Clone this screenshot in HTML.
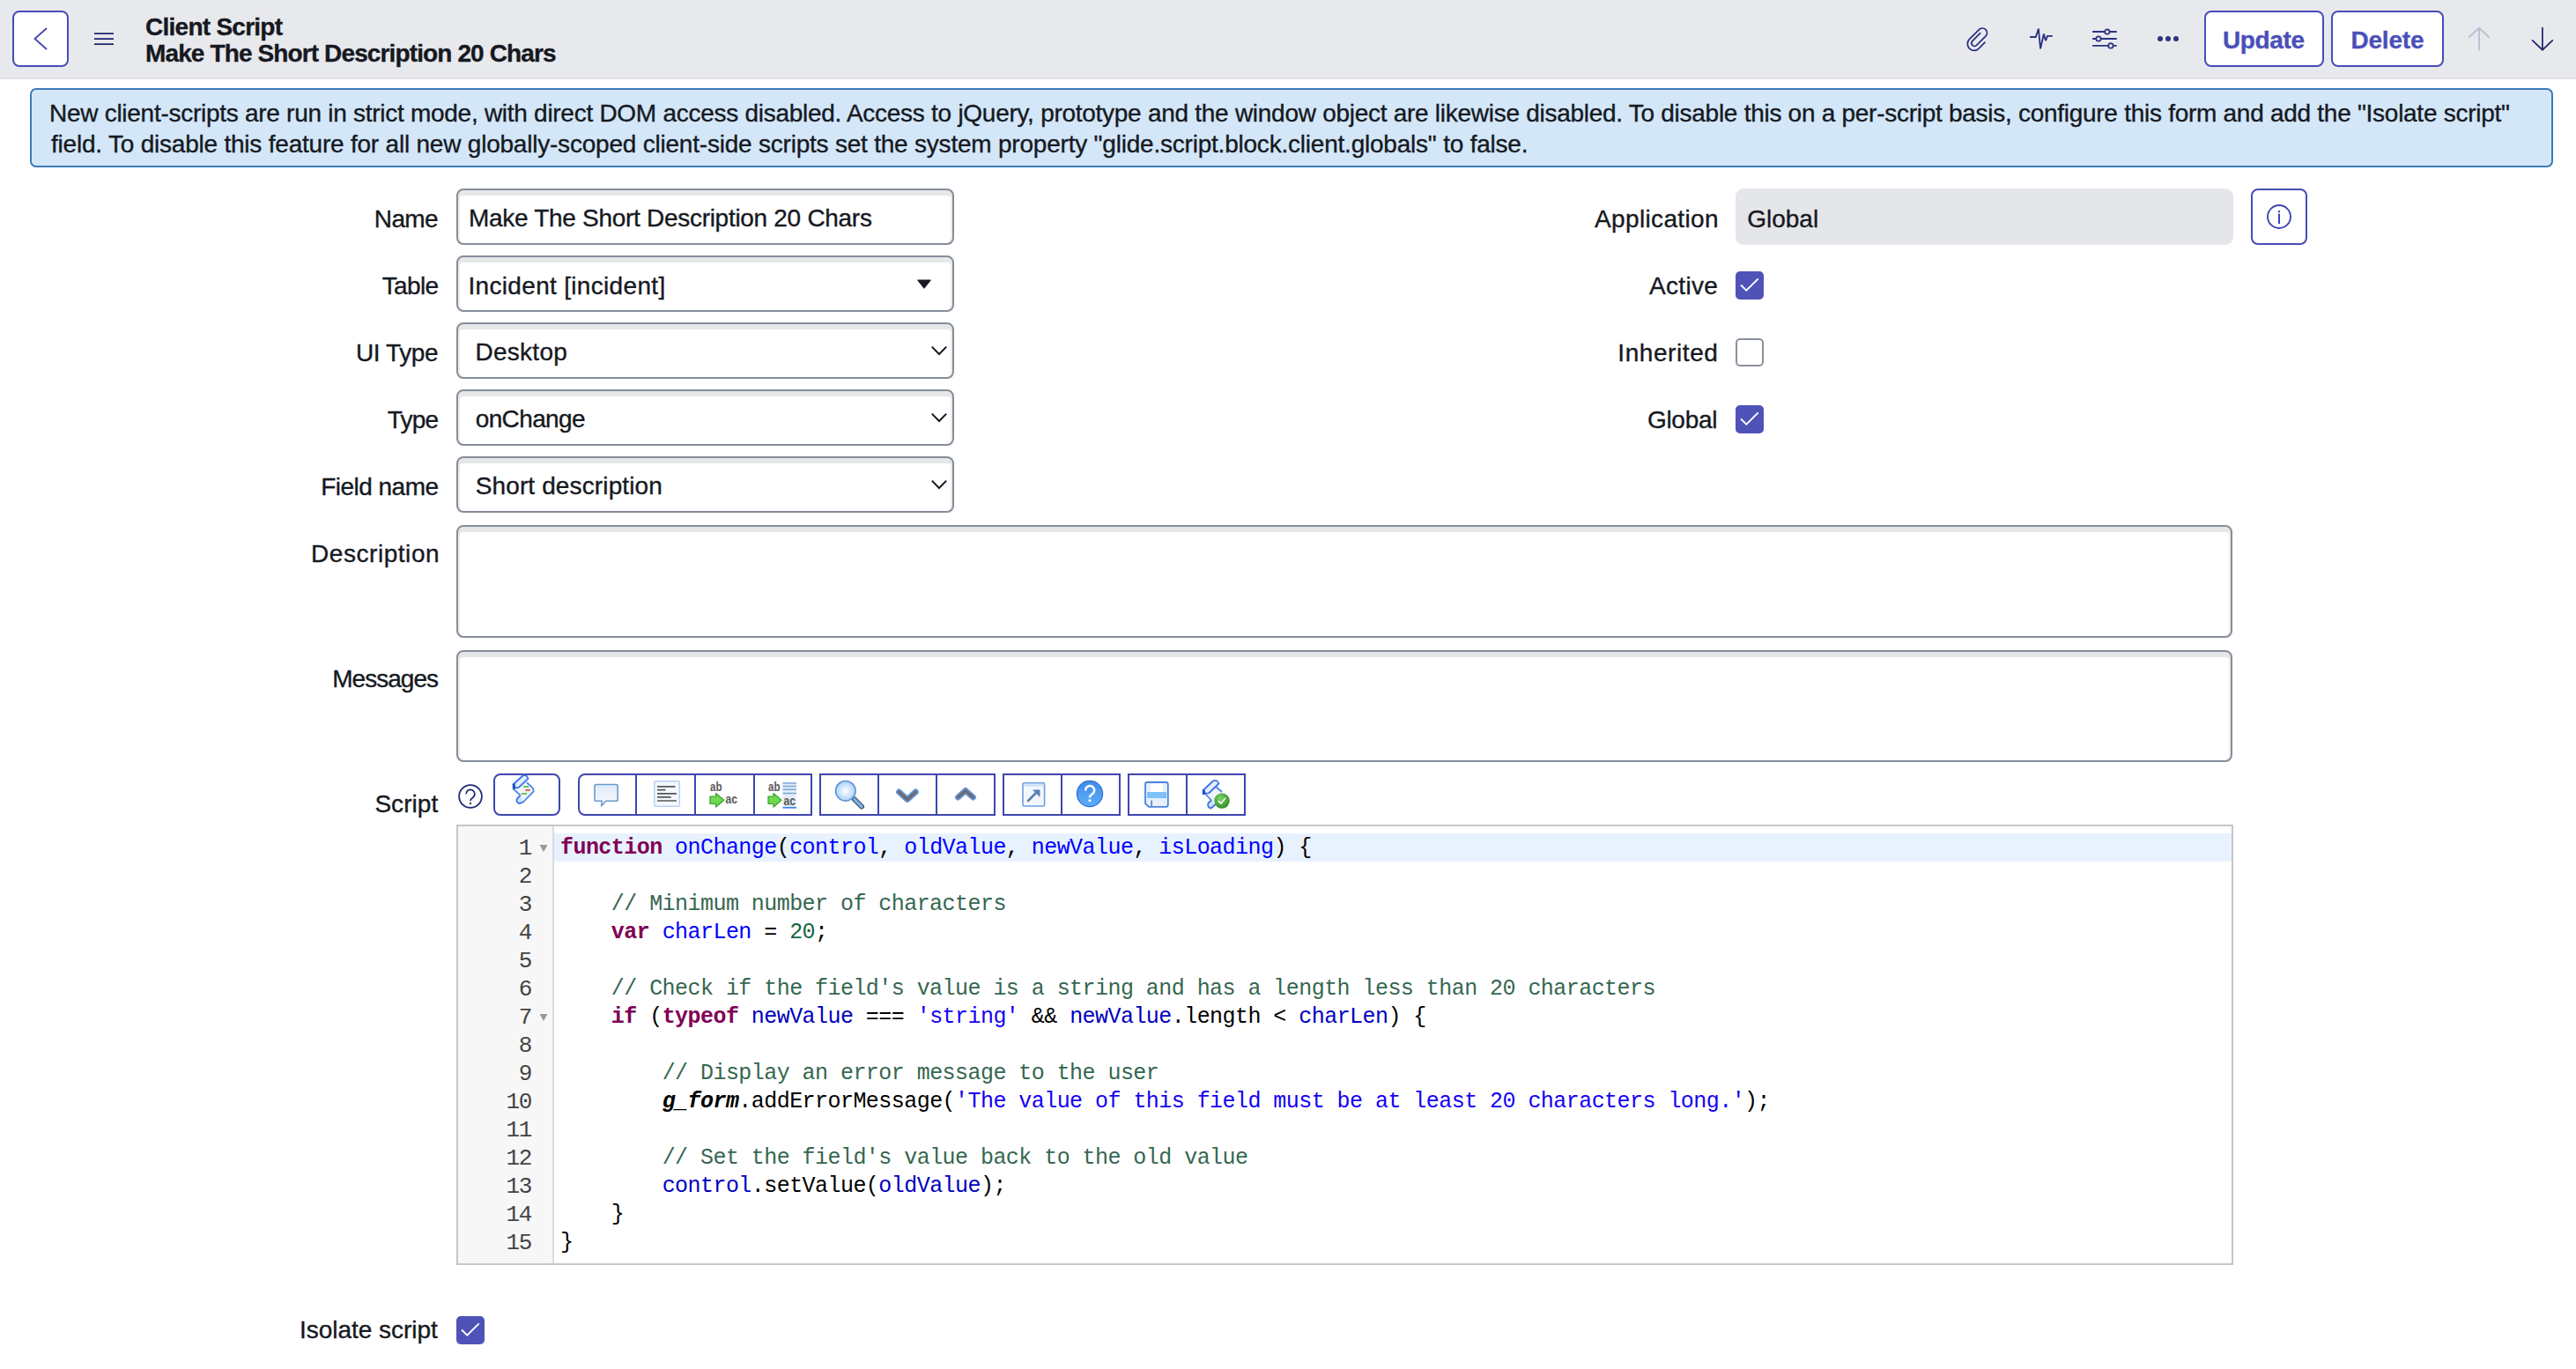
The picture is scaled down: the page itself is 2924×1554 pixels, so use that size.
<!DOCTYPE html>
<html><head><meta charset="utf-8"><title>Client Script</title>
<style>
*{box-sizing:border-box;margin:0;padding:0}
html,body{width:2924px;height:1554px;overflow:hidden;background:#fff}
body{position:relative;font-family:"Liberation Sans",sans-serif;color:#16191f}
.a{position:absolute}
.t{position:absolute;font-size:28px;line-height:32px;white-space:nowrap;-webkit-text-stroke:0.35px currentColor}
.btn{position:absolute;background:#fff;border:2px solid #474db7;border-radius:8px}
.inp{position:absolute;left:518px;width:565px;height:64px;border:2px solid #868d9a;border-radius:8px;background:#fff;box-shadow:inset 0 6px 0 #e6e8e8, inset 2px 0 0 #eceeee, inset -2px 0 0 #eceeee}
.cb{position:absolute;width:32px;height:32px;border-radius:5px;background:#4f53b8}
.cb svg{display:block}
.cbo{position:absolute;width:32px;height:32px;border-radius:5px;background:#fff;border:2px solid #8a909c}
.code{position:absolute;left:636px;font-family:"Liberation Mono",monospace;font-size:25px;letter-spacing:-0.55px;line-height:32px;white-space:pre;color:#000}
.ln{position:absolute;left:520px;width:83px;text-align:right;font-family:"Liberation Mono",monospace;font-size:26px;letter-spacing:-1.4px;line-height:32px;white-space:pre;color:#444}
.k{color:#7f0055;font-weight:bold}
.d{color:#0000ff}
.v{color:#0000c0}
.c{color:#35674f}
.n{color:#116644}
.s{color:#1400f5}
.g{font-weight:bold;font-style:italic}
svg{overflow:visible}
</style></head><body>
<div class="a" style="left:0;top:0;width:2924px;height:90px;background:#e8e9ed;border-bottom:2px solid #e2e3e7"></div>
<div class="btn" style="left:14px;top:12px;width:64px;height:64px"></div>
<svg class="a" style="left:14px;top:12px" width="64" height="64"><path d="M38.5 20.5 L25.5 32 L38.5 43.5" fill="none" stroke="#4349b3" stroke-width="1.9" stroke-linecap="round" stroke-linejoin="miter"/></svg>
<svg class="a" style="left:106px;top:34px" width="24" height="20"><path d="M1 4.1h22M1 10.1h22M1 16.1h22" stroke="#1f2470" stroke-width="1.7"/></svg>
<div class="t" style="left:165.0px;top:15.1px;letter-spacing:-0.740px;font-weight:bold;">Client Script</div>
<div class="t" style="left:165.0px;top:44.9px;letter-spacing:-0.876px;font-weight:bold;">Make The Short Description 20 Chars</div>
<svg class="a" style="left:2225px;top:25px" width="40" height="40"><path d="M22.7 12.7 L13.8 21.6 A3.36 3.36 0 0 0 18.6 26.3 L29.3 15.6 A5.26 5.26 0 0 0 21.9 8.2 L10.3 19.7 A7.5 7.5 0 0 0 20.9 30.3 L28 23.2" fill="none" stroke="#283281" stroke-width="1.75" stroke-linecap="round"/></svg>
<svg class="a" style="left:2295px;top:25px" width="40" height="40"><path d="M9.1 17 L15.8 17 L18.9 7.6 L21.1 30.3 L24.9 13.5 L27 21.1 L29.1 15.9 L34.8 15.9" fill="none" stroke="#283281" stroke-width="1.8" stroke-linejoin="miter" stroke-miterlimit="3"/></svg>
<svg class="a" style="left:2370px;top:25px" width="40" height="40"><path d="M5.1 11h27.6M5.1 19h27.6M5.1 26.9h27.6" stroke="#283281" stroke-width="1.8"/><circle cx="21.9" cy="11" r="2.7" fill="#e8e9ed" stroke="#283281" stroke-width="1.7"/><circle cx="12" cy="19" r="2.7" fill="#e8e9ed" stroke="#283281" stroke-width="1.7"/><circle cx="25.9" cy="26.9" r="2.7" fill="#e8e9ed" stroke="#283281" stroke-width="1.7"/></svg>
<svg class="a" style="left:2440px;top:30px" width="40" height="30"><circle cx="12" cy="14" r="3" fill="#2d357f"/><circle cx="21" cy="14" r="3" fill="#2d357f"/><circle cx="30" cy="14" r="3" fill="#2d357f"/></svg>
<div class="btn" style="left:2502px;top:12px;width:136px;height:64px"></div>
<div class="btn" style="left:2646px;top:12px;width:128px;height:64px"></div>
<div class="t" style="left:2523.0px;top:30.3px;letter-spacing:-0.365px;font-weight:bold;color:#4a50b8;">Update</div>
<div class="t" style="left:2668.4px;top:30.3px;letter-spacing:-0.174px;font-weight:bold;color:#4a50b8;">Delete</div>
<svg class="a" style="left:2795px;top:25px" width="110" height="40"><path d="M19 6.8V31.6M7.7 17.1L19 6.8L30.1 17.1" fill="none" stroke="#b8bcd1" stroke-width="1.75" stroke-linecap="round"/><path d="M90.9 6.5V31.7M79.6 20.9L90.9 31.7L102.3 20.9" fill="none" stroke="#20276f" stroke-width="1.75" stroke-linecap="round"/></svg>
<div class="a" style="left:34px;top:100px;width:2864px;height:90px;background:#d3e7f9;border:2px solid #3a7ab8;border-radius:7px"></div>
<div class="t" style="left:56.0px;top:112.9px;letter-spacing:-0.275px;">New client-scripts are run in strict mode, with direct DOM access disabled. Access to jQuery, prototype and the window object are likewise disabled. To disable this on a per-script basis, configure this form and add the &quot;Isolate script&quot;</div>
<div class="t" style="left:58.0px;top:147.9px;letter-spacing:-0.214px;">field. To disable this feature for all new globally-scoped client-side scripts set the system property &quot;glide.script.block.client.globals&quot; to false.</div>
<div class="t" style="left:424.8px;top:232.9px;letter-spacing:-0.639px;">Name</div>
<div class="t" style="left:433.7px;top:308.8px;letter-spacing:-0.641px;">Table</div>
<div class="t" style="left:403.9px;top:384.9px;letter-spacing:-0.385px;">UI Type</div>
<div class="t" style="left:439.8px;top:460.8px;letter-spacing:-0.810px;">Type</div>
<div class="t" style="left:364.2px;top:536.5px;letter-spacing:-0.515px;">Field name</div>
<div class="t" style="left:353.0px;top:613.1px;letter-spacing:0.552px;">Description</div>
<div class="t" style="left:377.2px;top:754.5px;letter-spacing:-0.973px;">Messages</div>
<div class="t" style="left:425.4px;top:896.9px;letter-spacing:0.041px;">Script</div>
<div class="t" style="left:340.0px;top:1494.1px;letter-spacing:-0.030px;">Isolate script</div>
<div class="inp" style="top:214px"></div>
<div class="inp" style="top:290px"></div>
<div class="inp" style="top:366px"></div>
<div class="inp" style="top:442px"></div>
<div class="inp" style="top:518px"></div>
<div class="inp" style="top:596px;width:2016px;height:128px"></div>
<div class="inp" style="top:738px;width:2016px;height:127px"></div>
<div class="t" style="left:532.0px;top:232.2px;letter-spacing:-0.295px;">Make The Short Description 20 Chars</div>
<div class="t" style="left:531.5px;top:308.6px;letter-spacing:0.320px;">Incident [incident]</div>
<div class="t" style="left:539.6px;top:384.1px;letter-spacing:0.243px;">Desktop</div>
<div class="t" style="left:539.7px;top:460.1px;letter-spacing:-0.622px;">onChange</div>
<div class="t" style="left:539.7px;top:536.1px;letter-spacing:0.129px;">Short description</div>
<svg class="a" style="left:1040px;top:316px" width="18" height="13"><path d="M1.8 2 L16.2 2 L9 11 Z" fill="#16191f" stroke="#16191f" stroke-width="1.2" stroke-linejoin="round"/></svg>
<svg class="a" style="left:1056px;top:392px" width="20" height="12"><path d="M1.8 1.6 L10 10 L18.2 1.6" fill="none" stroke="#16191f" stroke-width="2"/></svg>
<svg class="a" style="left:1056px;top:468px" width="20" height="12"><path d="M1.8 1.6 L10 10 L18.2 1.6" fill="none" stroke="#16191f" stroke-width="2"/></svg>
<svg class="a" style="left:1056px;top:544px" width="20" height="12"><path d="M1.8 1.6 L10 10 L18.2 1.6" fill="none" stroke="#16191f" stroke-width="2"/></svg>
<div class="t" style="left:1810.0px;top:232.9px;letter-spacing:0.359px;">Application</div>
<div class="t" style="left:1871.9px;top:309.0px;letter-spacing:0.345px;">Active</div>
<div class="t" style="left:1836.3px;top:384.7px;letter-spacing:0.576px;">Inherited</div>
<div class="t" style="left:1869.9px;top:461.0px;letter-spacing:-0.263px;">Global</div>
<div class="a" style="left:1970px;top:214px;width:565px;height:64px;background:#e5e6ea;border-radius:9px"></div>
<div class="t" style="left:1983.3px;top:232.5px;letter-spacing:-0.023px;">Global</div>
<div class="btn" style="left:2555px;top:214px;width:64px;height:64px"></div>
<svg class="a" style="left:2555px;top:214px" width="64" height="64"><circle cx="32" cy="32" r="13" fill="none" stroke="#3f46b0" stroke-width="1.9"/><rect x="31" y="25" width="2" height="2.2" fill="#3f46b0"/><rect x="31" y="28.6" width="2" height="11.4" fill="#3f46b0"/></svg>
<div class="cb" style="left:1970px;top:308px"><svg width="32" height="32"><path d="M6 15.5 L12.3 21.7 L25.7 8.3" fill="none" stroke="#fff" stroke-width="1.9"/></svg></div>
<div class="cbo" style="left:1970px;top:384px"></div>
<div class="cb" style="left:1970px;top:460px"><svg width="32" height="32"><path d="M6 15.5 L12.3 21.7 L25.7 8.3" fill="none" stroke="#fff" stroke-width="1.9"/></svg></div>
<div class="cb" style="left:518px;top:1494px"><svg width="32" height="32"><path d="M6 15.5 L12.3 21.7 L25.7 8.3" fill="none" stroke="#fff" stroke-width="1.9"/></svg></div>
<svg class="a" style="left:515px;top:885px" width="40" height="40"><circle cx="19" cy="19" r="12.9" fill="none" stroke="#1f2a70" stroke-width="1.8"/><path d="M14.1 16.4 A4.9 4.9 0 1 1 21.6 20.4 Q19 22 19 23.6 V24" fill="none" stroke="#1f2a70" stroke-width="1.8"/><rect x="18" y="25.9" width="2" height="2" fill="#1f2a70"/></svg>
<div class="a" style="left:560px;top:878px;width:76px;height:48px;border:2px solid #3f46b0;border-radius:8px;background:#fff"></div>
<div class="a" style="left:656px;top:878px;width:266px;height:48px;border:2px solid #3f46b0;border-radius:8px 0 0 8px;background:#fff"></div>
<div class="a" style="left:721px;top:878px;width:2px;height:48px;background:#3f46b0"></div>
<div class="a" style="left:788px;top:878px;width:2px;height:48px;background:#3f46b0"></div>
<div class="a" style="left:855px;top:878px;width:2px;height:48px;background:#3f46b0"></div>
<div class="a" style="left:930px;top:878px;width:200px;height:48px;border:2px solid #3f46b0;background:#fff"></div>
<div class="a" style="left:996px;top:878px;width:2px;height:48px;background:#3f46b0"></div>
<div class="a" style="left:1062px;top:878px;width:2px;height:48px;background:#3f46b0"></div>
<div class="a" style="left:1138px;top:878px;width:134px;height:48px;border:2px solid #3f46b0;background:#fff"></div>
<div class="a" style="left:1204px;top:878px;width:2px;height:48px;background:#3f46b0"></div>
<div class="a" style="left:1280px;top:878px;width:134px;height:48px;border:2px solid #3f46b0;background:#fff"></div>
<div class="a" style="left:1346px;top:878px;width:2px;height:48px;background:#3f46b0"></div>
<svg class="a" style="left:570px;top:875px" width="50" height="50"><defs><linearGradient id="gs" x1="0" y1="0" x2="1" y2="1"><stop offset="0" stop-color="#f2f7ff"/><stop offset="1" stop-color="#d6e5fb"/></linearGradient></defs><path d="M14 19 L27.8 13.1 L35.3 20.5 L24 35.5 L20.8 27.8 Z" fill="#eef4fd"/><path d="M12.6 20.5 L20.8 27.8 M27.8 13.1 L35.2 19.8 L35.6 23.4 L24 35.3" fill="none" stroke="#4d85ec" stroke-width="1.8" stroke-linejoin="round"/><path d="M12.5 15.5 L23.5 5.5 Q28 3.8 29.5 8.8 L18.8 18.8 Q14 20.5 12.5 15.5 Z" fill="url(#gs)" stroke="#3b73e6" stroke-width="1.8" stroke-linejoin="round"/><path d="M20.8 27.8 L17 31.5 Q15.2 36.5 20 37 L24 35.3" fill="#cfe0fb" stroke="#3b73e6" stroke-width="1.8" stroke-linejoin="round"/><path d="M13.3 14.6 V20.8" stroke="#1a4fc8" stroke-width="3"/><path d="M24 17.9h6M21.9 25.9h6.2" stroke="#63c94f" stroke-width="2"/><path d="M26.3 21.9h5.5" stroke="#e0643c" stroke-width="2"/></svg>
<svg class="a" style="left:660px;top:878px" width="60" height="48"><defs><linearGradient id="gb" x1="0" y1="0" x2="0" y2="1"><stop offset="0" stop-color="#dfe9f6"/><stop offset="1" stop-color="#f8fbff"/></linearGradient></defs><path d="M17 12.5 H39.5 Q41.2 12.5 41.2 14.5 V29.5 Q41.2 31.3 39.5 31.3 H28 L22.7 36.8 L23.2 31.3 H17 Q15 31.3 15 29.5 V14.5 Q15 12.5 17 12.5 Z" fill="url(#gb)" stroke="#6a9ad0" stroke-width="1.6" stroke-linejoin="round"/></svg>
<svg class="a" style="left:722px;top:878px" width="66" height="48"><rect x="20.8" y="8.8" width="28.5" height="28.5" rx="1.5" fill="#f4f8fe" stroke="#b9d0f5" stroke-width="1.5"/><path d="M24 14.8h20.5M24 18.6h9.5M24 22.9h22M24 26.8h15.7M24 31h22" stroke="#555" stroke-width="1.7"/></svg>
<svg class="a" style="left:789px;top:878px" width="66" height="48"><text x="17" y="20" font-family="Liberation Sans" font-size="15" font-weight="bold" fill="#5a5a5a" textLength="13.5" lengthAdjust="spacingAndGlyphs">ab</text><path d="M17 26 H23.5 V22.5 L32.8 30.3 L23.5 38 V34.5 H17 Z" fill="#6ed84f" stroke="#3aa02a" stroke-width="1.2" stroke-linejoin="round"/><text x="34.5" y="33.8" font-family="Liberation Sans" font-size="15" font-weight="bold" fill="#5a5a5a" textLength="13.5" lengthAdjust="spacingAndGlyphs">ac</text></svg>
<svg class="a" style="left:855px;top:878px" width="66" height="48"><text x="17" y="20" font-family="Liberation Sans" font-size="15" font-weight="bold" fill="#5a5a5a" textLength="13.5" lengthAdjust="spacingAndGlyphs">ab</text><rect x="33.5" y="10" width="15.4" height="29.6" fill="#e3ecf8"/><path d="M33.5 11h15.4M33.5 14.5h15.4M33.5 18.2h15.4M33.5 22.5h15.4" stroke="#7aa6d8" stroke-width="1.6"/><path d="M33.5 38.8h15.4" stroke="#3b82f0" stroke-width="1.6"/><path d="M17 26 H23 V22.5 L32 30.3 L23 38 V34.5 H17 Z" fill="#6ed84f" stroke="#3aa02a" stroke-width="1.2" stroke-linejoin="round"/><text x="34.5" y="35.6" font-family="Liberation Sans" font-size="15" font-weight="bold" fill="#5a5a5a" textLength="13.5" lengthAdjust="spacingAndGlyphs">ac</text></svg>
<svg class="a" style="left:930px;top:878px" width="66" height="48"><defs><radialGradient id="gm" cx="0.5" cy="0.5" r="0.5"><stop offset="0" stop-color="#ffffff"/><stop offset="1" stop-color="#a9d2fa"/></radialGradient></defs><path d="M40 29.5 L48 37.5" stroke="#3d4f68" stroke-width="6" stroke-linecap="round"/><path d="M40 29.5 L48 37.5" stroke="#7fb0e8" stroke-width="3.6" stroke-linecap="round"/><circle cx="29.8" cy="19.8" r="11.3" fill="url(#gm)" stroke="#5e92d2" stroke-width="1.6"/></svg>
<svg class="a" style="left:996px;top:878px" width="66" height="48"><path d="M24.5 21 L33.9 29.5 L43.3 21" fill="none" stroke="#4a86e0" stroke-width="7" stroke-linecap="round" stroke-linejoin="round" opacity="0.85"/><path d="M24.5 21 L33.9 29.5 L43.3 21" fill="none" stroke="#6b6b6b" stroke-width="3.6" stroke-linecap="round" stroke-linejoin="round"/></svg>
<svg class="a" style="left:1063px;top:878px" width="66" height="48"><path d="M24.5 27 L33 19.5 L41.5 27" fill="none" stroke="#4a86e0" stroke-width="7" stroke-linecap="round" stroke-linejoin="round" opacity="0.85"/><path d="M24.5 27 L33 19.5 L41.5 27" fill="none" stroke="#6b6b6b" stroke-width="3.6" stroke-linecap="round" stroke-linejoin="round"/></svg>
<svg class="a" style="left:1138px;top:878px" width="66" height="48"><rect x="23" y="10.8" width="24.6" height="26.2" rx="1.5" fill="#f3f7fd" stroke="#6d9ee0" stroke-width="1.6"/><path d="M23.8 13.5h23" stroke="#cfe2f8" stroke-width="2.5"/><path d="M29 31 L40 20" stroke="#5a7fb0" stroke-width="2.6" stroke-linecap="round"/><path d="M34 18.5 H42.5 V27 Z" fill="#5a7fb0"/></svg>
<svg class="a" style="left:1206px;top:878px" width="66" height="48"><defs><linearGradient id="gh" x1="0" y1="0" x2="0" y2="1"><stop offset="0" stop-color="#3f8ae8"/><stop offset="1" stop-color="#5cb0fa"/></linearGradient></defs><circle cx="31" cy="23" r="14.6" fill="url(#gh)" stroke="#2f6fd8" stroke-width="1.2"/><path d="M26.2 19.5 A5 5 0 1 1 33.5 23.5 Q31 25 31 27.5" fill="none" stroke="#fff" stroke-width="2.6"/><rect x="29.6" y="29.5" width="2.8" height="2.6" fill="#fff"/></svg>
<svg class="a" style="left:1280px;top:878px" width="66" height="48"><path d="M22 10 H43.5 Q45.8 10 45.8 12.3 V35.5 Q45.8 37.8 43.5 37.8 H24 L20 34 V12.3 Q20 10 22 10 Z" fill="#e7eff9" stroke="#4a82e2" stroke-width="1.8"/><rect x="26" y="11.5" width="14" height="9.5" fill="#fff"/><rect x="22" y="21" width="22" height="7" fill="#7ec0f8"/><path d="M27.2 30.5 V37" stroke="#5a7fc0" stroke-width="1.6"/></svg>
<svg class="a" style="left:1347px;top:878px" width="66" height="48"><defs><radialGradient id="gg" cx="0.4" cy="0.35" r="0.7"><stop offset="0" stop-color="#7ed46a"/><stop offset="1" stop-color="#2e8a22"/></radialGradient><linearGradient id="gs2" x1="0" y1="0" x2="1" y2="1"><stop offset="0" stop-color="#f2f7ff"/><stop offset="1" stop-color="#d6e5fb"/></linearGradient></defs><path d="M22 22 L33 15 L39.5 20.5 L31 34 L28 30.5 Z" fill="#eef4fd"/><path d="M21 23 L28 30.5 M33 15 L39.5 20.5" fill="none" stroke="#4d85ec" stroke-width="1.8" stroke-linecap="round"/><path d="M18.8 19 L30 8.5 Q34.5 6.5 36.5 11.5 L25.5 22 Q20.5 24 18.8 19 Z" fill="url(#gs2)" stroke="#3b73e6" stroke-width="1.8" stroke-linejoin="round"/><path d="M28 30.5 L24.5 33.5 Q23 38.5 27.5 39.5 L33 35" fill="#cfe0fb" stroke="#3b73e6" stroke-width="1.8" stroke-linejoin="round"/><path d="M19.3 18.5 V24" stroke="#1a4fc8" stroke-width="3"/><circle cx="40" cy="31" r="8.7" fill="url(#gg)"/><path d="M35.8 31 L38.8 34 L44 28" fill="none" stroke="#eaffea" stroke-width="1.8"/></svg>
<div class="a" style="left:518px;top:936px;width:2017px;height:500px;border:2px solid #c6c6c6;background:#fff"></div>
<div class="a" style="left:520px;top:938px;width:109px;height:496px;background:#f7f7f7;border-right:2px solid #dcdcdc"></div>
<div class="a" style="left:629px;top:946px;width:1904px;height:32px;background:#e8f2ff"></div>
<div class="code" style="top:947.2px"><span class="k">function</span> <span class="d">onChange</span>(<span class="d">control</span>, <span class="d">oldValue</span>, <span class="d">newValue</span>, <span class="d">isLoading</span>) {

    <span class="c">// Minimum number of characters</span>
    <span class="k">var</span> <span class="d">charLen</span> = <span class="n">20</span>;

    <span class="c">// Check if the field&#x27;s value is a string and has a length less than 20 characters</span>
    <span class="k">if</span> (<span class="k">typeof</span> <span class="v">newValue</span> === <span class="s">&#x27;string&#x27;</span> &amp;&amp; <span class="v">newValue</span>.length &lt; <span class="v">charLen</span>) {

        <span class="c">// Display an error message to the user</span>
        <span class="g">g_form</span>.addErrorMessage(<span class="s">&#x27;The value of this field must be at least 20 characters long.&#x27;</span>);

        <span class="c">// Set the field&#x27;s value back to the old value</span>
        <span class="v">control</span>.setValue(<span class="v">oldValue</span>);
    }
}</div>
<div class="ln" style="top:946.9px">1
2
3
4
5
6
7
8
9
10
11
12
13
14
15</div>
<svg class="a" style="left:611px;top:958px" width="12" height="10"><path d="M1.5 1 L10.5 1 L6 9 Z" fill="#999"/></svg>
<svg class="a" style="left:611px;top:1150px" width="12" height="10"><path d="M1.5 1 L10.5 1 L6 9 Z" fill="#999"/></svg>
</body></html>
